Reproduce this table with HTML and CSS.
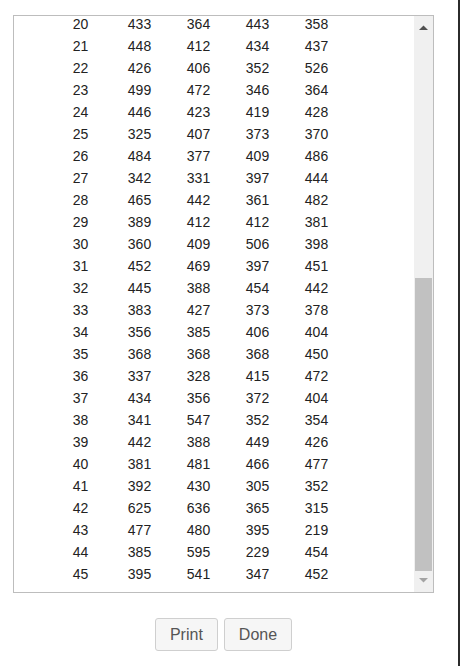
FILE: index.html
```html
<!DOCTYPE html>
<html>
<head>
<meta charset="utf-8">
<link rel="stylesheet" href="styles.css">
</head>
<body>
<div class="page">
  <div class="main">
    <div class="panel">
      <div class="viewport">
        <div class="rows">
          <div class="row"><span>20</span><span>433</span><span>364</span><span>443</span><span>358</span></div>
          <div class="row"><span>21</span><span>448</span><span>412</span><span>434</span><span>437</span></div>
          <div class="row"><span>22</span><span>426</span><span>406</span><span>352</span><span>526</span></div>
          <div class="row"><span>23</span><span>499</span><span>472</span><span>346</span><span>364</span></div>
          <div class="row"><span>24</span><span>446</span><span>423</span><span>419</span><span>428</span></div>
          <div class="row"><span>25</span><span>325</span><span>407</span><span>373</span><span>370</span></div>
          <div class="row"><span>26</span><span>484</span><span>377</span><span>409</span><span>486</span></div>
          <div class="row"><span>27</span><span>342</span><span>331</span><span>397</span><span>444</span></div>
          <div class="row"><span>28</span><span>465</span><span>442</span><span>361</span><span>482</span></div>
          <div class="row"><span>29</span><span>389</span><span>412</span><span>412</span><span>381</span></div>
          <div class="row"><span>30</span><span>360</span><span>409</span><span>506</span><span>398</span></div>
          <div class="row"><span>31</span><span>452</span><span>469</span><span>397</span><span>451</span></div>
          <div class="row"><span>32</span><span>445</span><span>388</span><span>454</span><span>442</span></div>
          <div class="row"><span>33</span><span>383</span><span>427</span><span>373</span><span>378</span></div>
          <div class="row"><span>34</span><span>356</span><span>385</span><span>406</span><span>404</span></div>
          <div class="row"><span>35</span><span>368</span><span>368</span><span>368</span><span>450</span></div>
          <div class="row"><span>36</span><span>337</span><span>328</span><span>415</span><span>472</span></div>
          <div class="row"><span>37</span><span>434</span><span>356</span><span>372</span><span>404</span></div>
          <div class="row"><span>38</span><span>341</span><span>547</span><span>352</span><span>354</span></div>
          <div class="row"><span>39</span><span>442</span><span>388</span><span>449</span><span>426</span></div>
          <div class="row"><span>40</span><span>381</span><span>481</span><span>466</span><span>477</span></div>
          <div class="row"><span>41</span><span>392</span><span>430</span><span>305</span><span>352</span></div>
          <div class="row"><span>42</span><span>625</span><span>636</span><span>365</span><span>315</span></div>
          <div class="row"><span>43</span><span>477</span><span>480</span><span>395</span><span>219</span></div>
          <div class="row"><span>44</span><span>385</span><span>595</span><span>229</span><span>454</span></div>
          <div class="row"><span>45</span><span>395</span><span>541</span><span>347</span><span>452</span></div>
        </div>
      </div>
      <div class="scrollbar">
        <div class="arrow up"><svg width="9" height="5" viewBox="0 0 9 5"><polygon points="0,5 4.5,0.5 9,5" fill="#505050"/></svg></div>
        <div class="track"><div class="thumb"></div></div>
        <div class="arrow down"><svg width="9" height="5" viewBox="0 0 9 5"><polygon points="0,0 9,0 4.5,4.5" fill="#a3a3a3"/></svg></div>
      </div>
    </div>
    <div class="actions">
      <button class="btn">Print</button>
      <button class="btn">Done</button>
    </div>
  </div>
  <div class="edge"></div>
</div>
</body>
</html>
```

FILE: styles.css
```css
html, body {
  margin: 0;
  padding: 0;
  background: #fff;
}
.page {
  display: flex;
  width: 460px;
  height: 666px;
}
.main {
  width: 458px;
  padding: 15px 0 0 13px;
  box-sizing: border-box;
}
.edge {
  width: 2px;
  background: #2b2b2b;
}
.panel {
  display: flex;
  width: 421px;
  height: 578px;
  box-sizing: border-box;
  border: 1px solid #bdbdbd;
}
.viewport {
  flex: 1;
  overflow: hidden;
}
.rows {
  margin-top: -3px;
  padding-left: 37px;
  font-family: "Liberation Sans", Arial, sans-serif;
  font-size: 14px;
  color: #222;
}
.row {
  display: grid;
  grid-template-columns: repeat(5, 59px);
  height: 22px;
  line-height: 22px;
}
.row span {
  text-align: center;
}
.scrollbar {
  width: 19px;
  background: #f0f0f0;
  display: flex;
  flex-direction: column;
}
.arrow {
  display: flex;
  justify-content: center;
  align-items: flex-start;
}
.arrow svg {
  display: block;
}
.arrow.up {
  height: 24px;
  padding-top: 9px;
  box-sizing: border-box;
}
.arrow.down {
  height: 20px;
  padding-top: 6px;
  box-sizing: border-box;
}
.track {
  flex: 1;
  display: flex;
  flex-direction: column;
}
.thumb {
  margin: 238px 0 0 1px;
  width: 17px;
  height: 293px;
  background: #c1c1c1;
}
.actions {
  width: 421px;
  display: flex;
  justify-content: center;
  gap: 6px;
  margin-top: 25px;
}
.btn {
  height: 33px;
  padding: 0 14px;
  border: 1px solid #cfcfcf;
  border-radius: 3px;
  background: #f6f6f6;
  color: #555;
  font-family: "Liberation Sans", Arial, sans-serif;
  font-size: 16px;
}
```
